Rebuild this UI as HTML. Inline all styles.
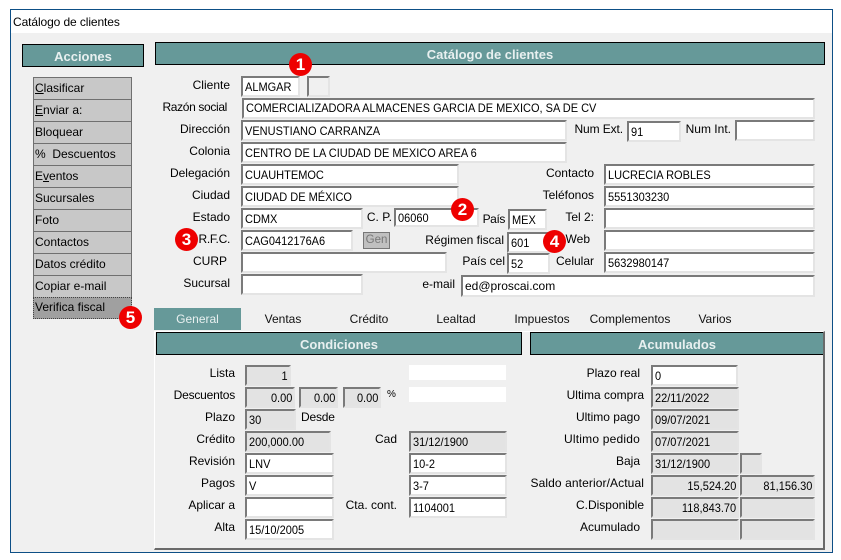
<!DOCTYPE html>
<html><head><meta charset="utf-8">
<style>
html,body{margin:0;padding:0;background:#fff}
#w{position:relative;width:841px;height:560px;overflow:hidden;background:#fff;font:12px/16px "Liberation Sans",sans-serif;color:#000}
#w div{position:absolute;box-sizing:border-box;white-space:nowrap}
.h{background:#669999;border:1px solid #000;color:#e8f0f0;font-weight:bold;text-align:center;font-size:13px;line-height:23px}
.b{left:33px;width:99px;height:23px;background:#c8c8c8;border:1px solid #707070;padding-left:1px;line-height:20px}
.f{background:#fff;border:2px solid;border-color:#7a7a7a #e4e4e4 #e4e4e4 #7a7a7a;padding-left:2px;line-height:19px;height:21px}
.f i{display:inline-block;font-style:normal;transform:scaleX(.917);transform-origin:0 50%}
.g{background:#e3e3e3}
.r{text-align:right;padding:0 1px 0 0}
.r i{transform-origin:100% 50%}
.l{text-align:right;height:16px}
.t{width:90px;text-align:center;top:311px;color:#111}
.c{width:23px;height:23px;border-radius:50%;background:#ee0000;color:#fff;font:bold 17px/23px "Liberation Sans",sans-serif;text-align:center}
</style></head><body>
<div id="w">
<div style="left:10px;top:9px;width:823px;height:544px;background:#f0f0f0;border:1px solid #0d4f86"></div>
<div style="left:11px;top:10px;width:821px;height:23px;background:#fff"></div>
<div style="left:13px;top:14px;letter-spacing:-.1px">Catálogo de clientes</div>

<div class="h" style="left:22px;top:44px;width:122px;height:23px">Acciones</div>
<div class="h" style="left:155px;top:42px;width:670px;height:23px">Catálogo de clientes</div>

<div class="b" style="top:77px"><u>C</u>lasificar</div>
<div class="b" style="top:99px"><u>E</u>nviar a:</div>
<div class="b" style="top:121px">Bloquear</div>
<div class="b" style="top:143px">%&nbsp; Descuentos</div>
<div class="b" style="top:165px">E<u>v</u>entos</div>
<div class="b" style="top:187px">Sucursales</div>
<div class="b" style="top:209px">Foto</div>
<div class="b" style="top:231px">Contactos</div>
<div class="b" style="top:253px">Datos crédito</div>
<div class="b" style="top:275px">Copiar e-mail</div>
<div class="b" style="top:297px;height:22px;background:#a0a0a0;border:1px dotted #444;line-height:18px">Verifica fiscal</div>

<div class="l" style="right:611px;top:77px">Cliente</div>
<div class="l" style="right:614px;top:99px;letter-spacing:-.35px">Razón social</div>
<div class="l" style="right:611px;top:121px">Dirección</div>
<div class="l" style="right:611px;top:143px">Colonia</div>
<div class="l" style="right:611px;top:165px">Delegación</div>
<div class="l" style="right:611px;top:187px">Ciudad</div>
<div class="l" style="right:611px;top:209px">Estado</div>
<div class="l" style="right:611px;top:231px;letter-spacing:-.3px">R.F.C.</div>
<div class="l" style="right:614px;top:253px">CURP</div>
<div class="l" style="right:611px;top:275px">Sucursal</div>

<div class="f" style="left:241px;top:76px;width:59px"><i>ALMGAR</i></div>
<div class="f g" style="left:307px;top:76px;width:23px;background:#f0f0f0"></div>
<div class="f" style="left:242px;top:98px;width:573px;line-height:17px"><i>COMERCIALIZADORA ALMACENES GARCIA DE MEXICO, SA DE CV</i></div>
<div class="f" style="left:241px;top:120px;width:326px"><i>VENUSTIANO CARRANZA</i></div>
<div class="f" style="left:241px;top:142px;width:326px"><i>CENTRO DE LA CIUDAD DE MEXICO AREA 6</i></div>
<div class="f" style="left:241px;top:164px;width:218px"><i>CUAUHTEMOC</i></div>
<div class="f" style="left:241px;top:186px;width:218px"><i>CIUDAD DE MÉXICO</i></div>
<div class="f" style="left:241px;top:208px;width:122px"><i>CDMX</i></div>
<div class="f" style="left:241px;top:230px;width:112px"><i>CAG0412176A6</i></div>
<div class="f" style="left:241px;top:252px;width:206px"></div>
<div class="f" style="left:241px;top:274px;width:122px"></div>

<div class="l" style="right:218px;top:121px;letter-spacing:-.1px">Num Ext.</div>
<div class="f" style="left:627px;top:121px;width:54px"><i>91</i></div>
<div class="l" style="right:110px;top:121px">Num Int.</div>
<div class="f" style="left:735px;top:120px;width:80px"></div>

<div class="l" style="right:247px;top:165px">Contacto</div>
<div class="l" style="right:247px;top:187px">Teléfonos</div>
<div class="l" style="right:247px;top:209px">Tel 2:</div>
<div class="l" style="right:251px;top:231px">Web</div>
<div class="l" style="right:247px;top:253px">Celular</div>
<div class="f" style="left:604px;top:164px;width:211px"><i>LUCRECIA ROBLES</i></div>
<div class="f" style="left:604px;top:186px;width:211px"><i>5551303230</i></div>
<div class="f" style="left:604px;top:208px;width:211px"></div>
<div class="f" style="left:604px;top:230px;width:211px"></div>
<div class="f" style="left:604px;top:252px;width:211px"><i>5632980147</i></div>

<div class="l" style="right:449px;top:209px">C. P.</div>
<div class="f" style="left:394px;top:208px;width:85px;height:19px;line-height:17px"><i>06060</i></div>
<div class="l" style="right:336px;top:211px;letter-spacing:-.4px">País</div>
<div class="f" style="left:508px;top:209px;width:39px"><i>MEX</i></div>
<div style="left:363px;top:232px;width:27px;height:17px;background:#c0c0c0;border:1px solid #777;color:#777;text-align:center;line-height:14px;font-size:11.5px">Gen</div>
<div class="l" style="right:337px;top:232px">Régimen fiscal</div>
<div class="f" style="left:507px;top:232px;width:46px"><i>601</i></div>
<div class="l" style="right:336px;top:253px">País cel</div>
<div class="f" style="left:507px;top:253px;width:43px"><i>52</i></div>
<div class="l" style="right:386px;top:276px">e-mail</div>
<div class="f" style="left:461px;top:275px;width:354px;height:22px">ed@proscai.com</div>

<div style="left:154px;top:308px;width:87px;height:22px;background:#669999;color:#e8f0f0;text-align:center;line-height:22px">General</div>
<div class="t" style="left:238px">Ventas</div>
<div class="t" style="left:324px">Crédito</div>
<div class="t" style="left:411px">Lealtad</div>
<div class="t" style="left:497px">Impuestos</div>
<div class="t" style="left:585px">Complementos</div>
<div class="t" style="left:670px">Varios</div>

<div style="left:154px;top:331px;width:671px;height:219px;border-style:solid;border-color:#fff #6a6a6a #6a6a6a #fff;border-width:1px 2px 2px 1px"></div>
<div class="h" style="left:156px;top:332px;width:366px;height:23px">Condiciones</div>
<div class="h" style="left:530px;top:332px;width:293px;height:23px;border-right:0">Acumulados</div>

<div class="l" style="right:606px;top:365px">Lista</div>
<div class="l" style="right:606px;top:387px;letter-spacing:-.2px">Descuentos</div>
<div class="l" style="right:606px;top:409px">Plazo</div>
<div class="l" style="right:606px;top:431px">Crédito</div>
<div class="l" style="right:606px;top:453px">Revisión</div>
<div class="l" style="right:606px;top:475px">Pagos</div>
<div class="l" style="right:606px;top:497px">Aplicar a</div>
<div class="l" style="right:606px;top:519px">Alta</div>

<div class="f g r" style="left:245px;top:365px;width:46px"><i>1</i></div>
<div class="f g r" style="left:245px;top:387px;width:50px"><i>0.00</i></div>
<div class="f g r" style="left:299px;top:387px;width:39px"><i>0.00</i></div>
<div class="f g r" style="left:343px;top:387px;width:38px"><i>0.00</i></div>
<div style="left:387px;top:387px;font-size:10px">%</div>
<div style="left:409px;top:365px;width:97px;height:15px;background:#fff"></div>
<div style="left:409px;top:387px;width:97px;height:15px;background:#fff"></div>
<div class="f g" style="left:245px;top:409px;width:51px"><i>30</i></div>
<div style="left:301px;top:409px;letter-spacing:-.2px">Desde</div>
<div class="f g" style="left:245px;top:431px;width:86px"><i>200,000.00</i></div>
<div class="f" style="left:245px;top:453px;width:89px"><i>LNV</i></div>
<div class="f" style="left:245px;top:475px;width:89px"><i>V</i></div>
<div class="f" style="left:245px;top:497px;width:89px"></div>
<div class="f" style="left:245px;top:519px;width:89px"><i>15/10/2005</i></div>

<div class="l" style="right:444px;top:431px">Cad</div>
<div class="l" style="right:444px;top:497px">Cta. cont.</div>
<div class="f g" style="left:409px;top:431px;width:98px"><i>31/12/1900</i></div>
<div class="f" style="left:409px;top:453px;width:98px"><i>10-2</i></div>
<div class="f" style="left:409px;top:475px;width:98px"><i>3-7</i></div>
<div class="f" style="left:409px;top:497px;width:98px"><i>1104001</i></div>

<div class="l" style="right:201px;top:365px">Plazo real</div>
<div class="l" style="right:197px;top:387px">Ultima compra</div>
<div class="l" style="right:201px;top:409px">Ultimo pago</div>
<div class="l" style="right:201px;top:431px;letter-spacing:.2px">Ultimo pedido</div>
<div class="l" style="right:201px;top:453px">Baja</div>
<div class="l" style="right:197px;top:475px;letter-spacing:.1px">Saldo anterior/Actual</div>
<div class="l" style="right:197px;top:497px">C.Disponible</div>
<div class="l" style="right:201px;top:519px">Acumulado</div>

<div class="f" style="left:651px;top:365px;width:87px"><i>0</i></div>
<div class="f g" style="left:651px;top:387px;width:88px"><i>22/11/2022</i></div>
<div class="f g" style="left:651px;top:409px;width:88px"><i>09/07/2021</i></div>
<div class="f g" style="left:651px;top:431px;width:88px"><i>07/07/2021</i></div>
<div class="f g" style="left:651px;top:453px;width:88px"><i>31/12/1900</i></div>
<div class="f g" style="left:740px;top:453px;width:22px"></div>
<div class="f g r" style="left:651px;top:475px;width:88px"><i>15,524.20</i></div>
<div class="f g r" style="left:740px;top:475px;width:75px"><i>81,156.30</i></div>
<div class="f g r" style="left:651px;top:497px;width:88px"><i>118,843.70</i></div>
<div class="f g" style="left:740px;top:497px;width:75px"></div>
<div class="f g" style="left:651px;top:519px;width:88px"></div>
<div class="f g" style="left:740px;top:519px;width:75px"></div>

<div class="c" style="left:289px;top:53px">1</div>
<div class="c" style="left:451px;top:198px">2</div>
<div class="c" style="left:175px;top:228px">3</div>
<div class="c" style="left:543px;top:230px">4</div>
<div class="c" style="left:119px;top:306px">5</div>
</div>
</body></html>
